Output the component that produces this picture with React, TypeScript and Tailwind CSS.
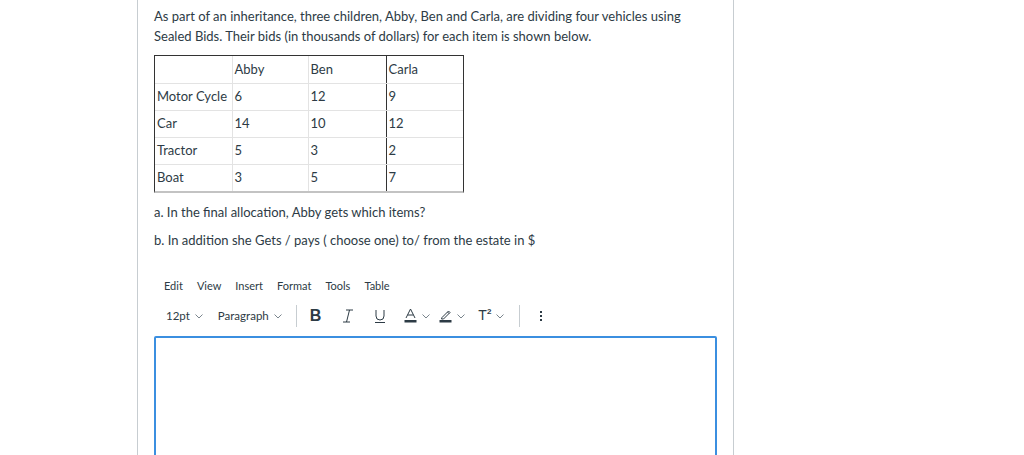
import React from 'react';

type Row = { item: string; abby: string; ben: string; carla: string };

const rows: Row[] = [
  { item: 'Motor Cycle', abby: '6', ben: '12', carla: '9' },
  { item: 'Car', abby: '14', ben: '10', carla: '12' },
  { item: 'Tractor', abby: '5', ben: '3', carla: '2' },
  { item: 'Boat', abby: '3', ben: '5', carla: '7' },
];

const Chevron = () => (
  <svg width="8" height="5" viewBox="0 0 8 5" className="ml-[5px] mt-[1px]">
    <path d="M0.5 0.5 L4 4 L7.5 0.5" fill="none" stroke="#6b7780" strokeWidth="0.9" />
  </svg>
);

export default function App() {
  const cell = 'h-[27px] px-[2px] text-left align-middle font-normal';

  return (
    <div className="min-h-screen w-full bg-white text-[#2d3b45] font-['Lato','Noto_Sans',sans-serif]">
      <div className="ml-[137px] w-[597px] min-h-[455px] border-x border-[#c7cdd1] pl-[16px] pr-[16px] pt-[6px]">
        <p className="text-[13px] leading-[20px]">
          As part of an inheritance, three children, Abby, Ben and Carla, are dividing four vehicles using
          Sealed Bids. Their bids (in thousands of dollars) for each item is shown below.
        </p>

        {/* tabla de pujas */}
        <div className="mt-[9px] w-fit border-t border-l border-r border-[#333] border-b-2 border-b-[#c3c3c3]">
          <table className="w-[308px] border-collapse text-[13px]">
            <thead>
              <tr>
                <th className={`${cell} w-[77px] border-b border-r border-[#e3e3e3]`}></th>
                <th className={`${cell} w-[76px] border-b border-r border-[#e3e3e3]`}>Abby</th>
                <th className={`${cell} w-[78px] border-b border-b-[#e3e3e3] border-r border-r-[#333]`}>Ben</th>
                <th className={`${cell} border-b border-[#e3e3e3]`}>Carla</th>
              </tr>
            </thead>
            <tbody>
              {rows.map((r, i) => {
                const bb = i < rows.length - 1 ? 'border-b border-b-[#e3e3e3]' : '';
                return (
                  <tr key={r.item}>
                    <td className={`${cell} ${bb} border-r border-r-[#e3e3e3]`}>{r.item}</td>
                    <td className={`${cell} ${bb} border-r border-r-[#e3e3e3]`}>{r.abby}</td>
                    <td className={`${cell} ${bb} border-r border-r-[#333]`}>{r.ben}</td>
                    <td className={`${cell} ${bb}`}>{r.carla}</td>
                  </tr>
                );
              })}
            </tbody>
          </table>
        </div>

        <p className="mt-[9px] text-[13px] leading-[20px]">a. In the final allocation, Abby gets which items?</p>
        <p className="mt-[8px] text-[13px] leading-[20px]">b. In addition she Gets / pays ( choose one) to/ from the estate in $</p>

        {/* editor */}
        <div className="mt-[28px] flex items-center gap-[14px] pl-[10px] text-[11px] text-[#2d3b45]">
          <span>Edit</span>
          <span>View</span>
          <span>Insert</span>
          <span>Format</span>
          <span>Tools</span>
          <span>Table</span>
        </div>

        <div className="mt-[10px] flex h-[22px] items-center pl-[12px] text-[11.5px]">
          <span className="flex items-center">12pt<Chevron /></span>
          <span className="ml-[15px] flex items-center">Paragraph<Chevron /></span>
          <span className="ml-[14px] h-[22px] w-px bg-[#c7cdd1]" />
          <span className="ml-[13px] text-[16px] font-bold font-['Liberation_Sans',sans-serif]">B</span>
          <svg width="12" height="14" viewBox="0 0 12 14" className="ml-[21px]">
            <path d="M4 1 H11 M1 13 H8 M7.5 1 L4.5 13" stroke="#2d3b45" strokeWidth="1" fill="none" />
          </svg>
          <svg width="12" height="14" viewBox="0 0 12 14" className="ml-[20px]">
            <path d="M2 1 V7 a4 4 0 0 0 8 0 V1 M1 13.5 H11" stroke="#2d3b45" strokeWidth="1" fill="none" />
          </svg>
          <span className="ml-[18px] flex items-center">
            <svg width="13" height="15" viewBox="0 0 13 15">
              <path d="M2 10 L6.5 1 L11 10 M3.7 7 H9.3" stroke="#2d3b45" strokeWidth="1" fill="none" />
              <rect x="0.5" y="12" width="12" height="2.5" fill="#2d3b45" />
            </svg>
            <Chevron />
          </span>
          <span className="ml-[9px] flex items-center">
            <svg width="13" height="15" viewBox="0 0 13 15">
              <path d="M3 9.5 L9.5 3 L11 4.5 L4.5 11 L2.5 11 Z M8.5 4 L10 5.5" stroke="#2d3b45" strokeWidth="1" fill="none" />
              <rect x="0.5" y="12" width="12" height="2.5" fill="#2d3b45" />
            </svg>
            <Chevron />
          </span>
          <span className="ml-[13px] flex items-center text-[14px] font-['Liberation_Sans',sans-serif]">
            T<sup className="text-[8px] font-bold">2</sup>
            <Chevron />
          </span>
          <span className="ml-[15px] h-[22px] w-px bg-[#c7cdd1]" />
          <span className="ml-[20px] flex flex-col gap-[2px]">
            <span className="h-[2px] w-[2px] bg-[#2d3b45]" />
            <span className="h-[2px] w-[2px] bg-[#2d3b45]" />
            <span className="h-[2px] w-[2px] bg-[#2d3b45]" />
          </span>
        </div>

        <div className="mt-[9px] h-[160px] w-[563px] rounded-t-[2px] border-2 border-[#3b8fe0] bg-white" />
      </div>
    </div>
  );
}
